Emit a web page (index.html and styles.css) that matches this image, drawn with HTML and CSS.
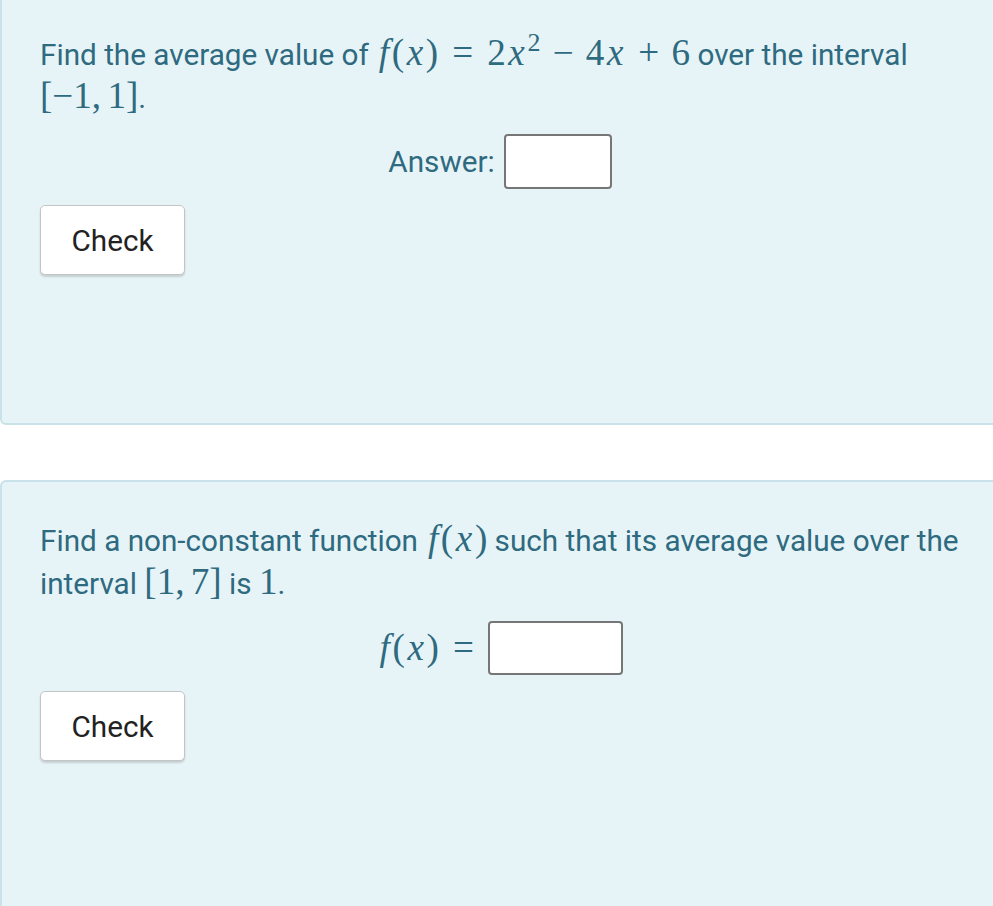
FILE: index.html
```html
<html>
  <head>
    <title>Average value</title>
    <link rel="stylesheet" href="styles.css">
  </head>
  <body>
    <div class="page">
      <div class="card first">
        <p class="question">Find the average value of <span class="math"><i>f</i>(<i>x</i>)<span class="rel">=</span>2<i>x</i><sup>2</sup><span class="bin">−</span>4<i>x</i><span class="bin">+</span>6</span> over the interval <span class="math">[−1,<span class="sp"></span>1]</span>.</p>
        <div class="answer-row">
          <label class="label">Answer:</label>
          <input class="answer" type="text">
        </div>
        <button class="check">Check</button>
      </div>
      <div class="card">
        <p class="question">Find a non-constant function <span class="math"><i>f</i>(<i>x</i>)</span> such that its average value over the interval <span class="math">[1,<span class="sp"></span>7]</span> is <span class="math">1</span>.</p>
        <div class="answer-row">
          <span class="math label"><i>f</i>(<i>x</i>)<span class="rel">=</span></span>
          <input class="answer wide" type="text">
        </div>
        <button class="check">Check</button>
      </div>
    </div>
  </body>
</html>
```
FILE: styles.css
```css
body {
  margin: 0;
  background-color: #fff;
  overflow: hidden;
  font-family: Roboto, "Liberation Sans", sans-serif;
  font-size: 29.7px;
  color: #2e6a80;
}
.page {
  margin-top: -6px;
}
.card {
  box-sizing: border-box;
  width: 1000px;
  height: 431px;
  margin-bottom: 55px;
  padding: 37px 38px 0 38px;
  border: 2px solid #c9e1e8;
  border-radius: 6px;
  background-color: #e7f4f7;
}
.question {
  margin: 0 -12px 0 0;
  line-height: 43px;
}
.math {
  font-family: "Liberation Serif", "DejaVu Serif", serif;
  font-size: 1.25em;
  line-height: 1;
  white-space: nowrap;
}
.math i {
  font-style: italic;
  padding: 0 0.07em;
}
.math sup {
  font-size: 0.7em;
  vertical-align: 0.55em;
  line-height: 0;
}
.rel {
  padding: 0 0.38em;
}
.bin {
  padding: 0 0.33em;
}
.sp {
  display: inline-block;
  width: 0.17em;
}
.answer-row {
  display: flex;
  align-items: center;
  justify-content: center;
  margin-top: 15px;
  height: 55px;
}
.label {
  margin-right: 9px;
}
.math.label {
  margin-right: 0;
}
.answer {
  box-sizing: border-box;
  width: 108px;
  height: 55px;
  border: 2px solid #767676;
  border-radius: 4px;
  background-color: #fff;
}
.answer.wide {
  width: 135px;
  height: 54px;
}
.check {
  display: block;
  box-sizing: border-box;
  width: 145px;
  height: 70px;
  margin-top: 16px;
  border: 1px solid #c4c4c4;
  border-radius: 5px;
  background-color: #fff;
  box-shadow: 0 2px 2px rgba(0, 0, 0, 0.15);
  font-family: Roboto, "Liberation Sans", sans-serif;
  font-size: 29.7px;
  color: #222;
}
```
